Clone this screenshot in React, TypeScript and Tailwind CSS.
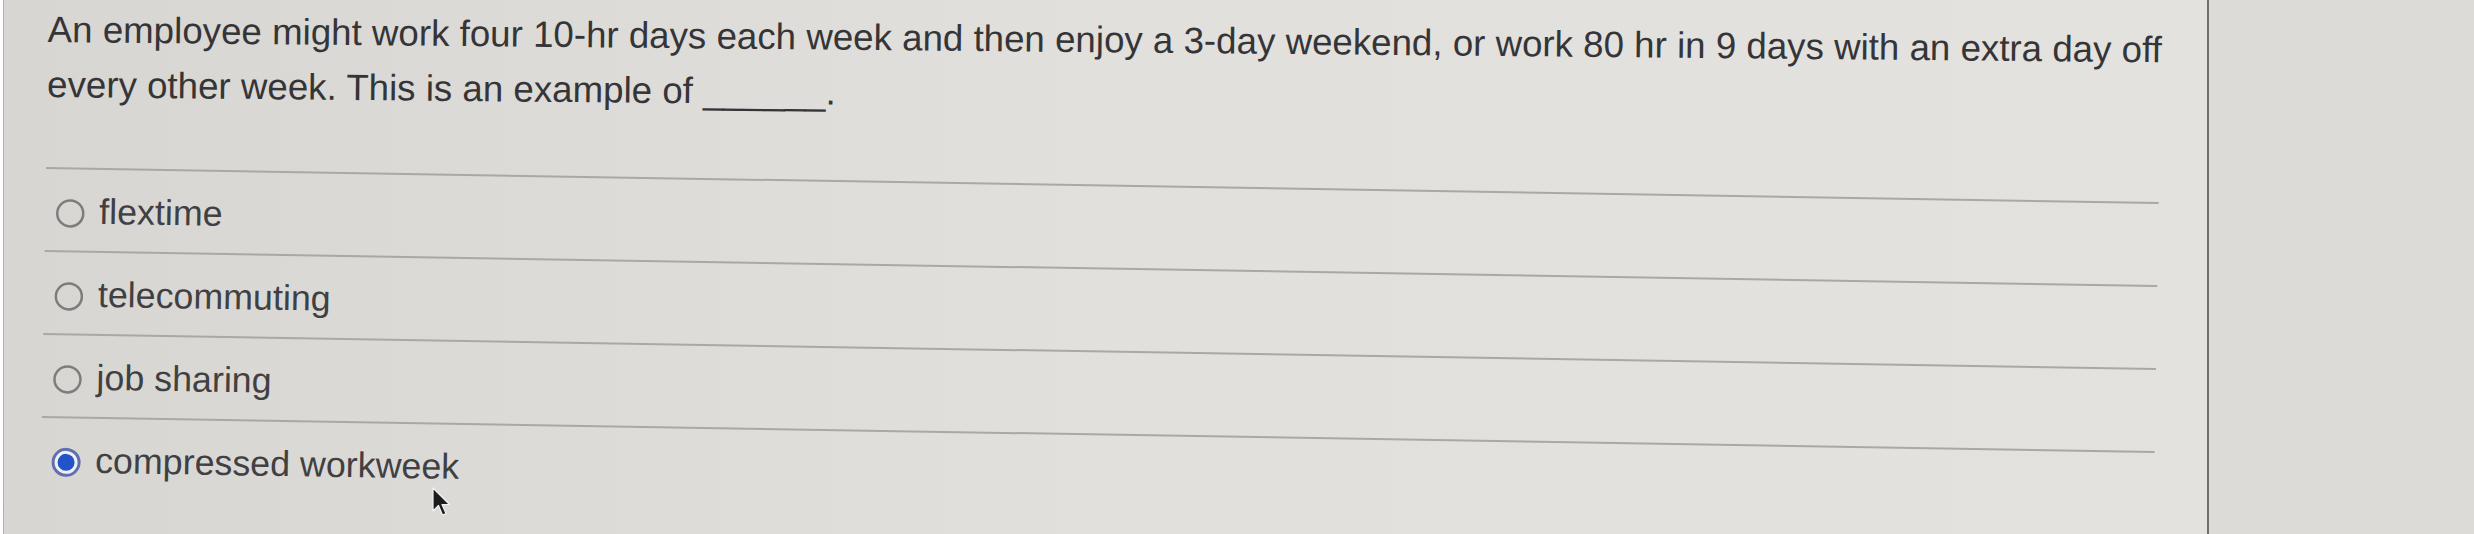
import React from "react";

type Option = { label: string; selected?: boolean };

const options: Option[] = [
  { label: "flextime" },
  { label: "telecommuting" },
  { label: "job sharing" },
  { label: "compressed workweek", selected: true },
];

const Radio = ({ selected }: { selected?: boolean }) =>
  selected ? (
    <svg width="30" height="30" viewBox="0 0 30 30" className="shrink-0 mt-[4px]">
      <circle cx="15" cy="15" r="13" fill="#eef0f4" stroke="#5f70ad" strokeWidth="3" />
      <circle cx="15" cy="15" r="8.5" fill="#2452c8" />
    </svg>
  ) : (
    <svg width="30" height="30" viewBox="0 0 30 30" className="shrink-0 mt-[4px]">
      <circle cx="15" cy="15" r="13" fill="none" stroke="#7d7d7d" strokeWidth="2.5" />
    </svg>
  );

const Cursor = () => (
  <svg
    width="24"
    height="34"
    viewBox="0 0 24 34"
    className="absolute left-[431px] top-[486px]"
  >
    <path
      d="M2 2 L2 25 L7.5 19.5 L11.5 29 L15 27.5 L11 18.5 L18.5 18.5 Z"
      fill="#1c1c1e"
      stroke="#f2f2f2"
      strokeWidth="1.2"
      strokeLinejoin="round"
    />
  </svg>
);

export default function App() {
  return (
    <div className="relative flex w-[2474px] h-[534px] overflow-hidden font-['Liberation_Sans',Arial,sans-serif]">
      <div className="w-[2204px] shrink-0 ml-[3px] border-l border-[#b3b1ad] pl-[42px] bg-linear-to-r from-[#d8d6d2] via-[#e2e0dc] to-[#e4e2de]">
        <p className="pl-[2px] pt-[2px] text-[36.7px] leading-[55px] text-[#353538] rotate-[0.55deg] origin-top-left">
          An employee might work four 10-hr days each week and then enjoy a 3-day weekend, or work 80 hr in 9 days with an
          extra day off every other week. This is an example of ______.
        </p>

        <ul className="mt-[55px] w-[2113px] rotate-[0.95deg] origin-top-left">
          {options.map((opt) => (
            <li
              key={opt.label}
              className="flex items-center gap-[14px] border-t-2 border-[#aaa8a4] pl-[10px] pt-[20px] pb-[17px]"
            >
              <Radio selected={opt.selected} />
              <span className="text-[35.8px] leading-[44px] text-[#404043]">{opt.label}</span>
            </li>
          ))}
        </ul>
      </div>

      <div className="flex-1 border-l-2 border-[#6f6f6f] bg-[#dddbd7]" />

      <Cursor />
    </div>
  );
}
